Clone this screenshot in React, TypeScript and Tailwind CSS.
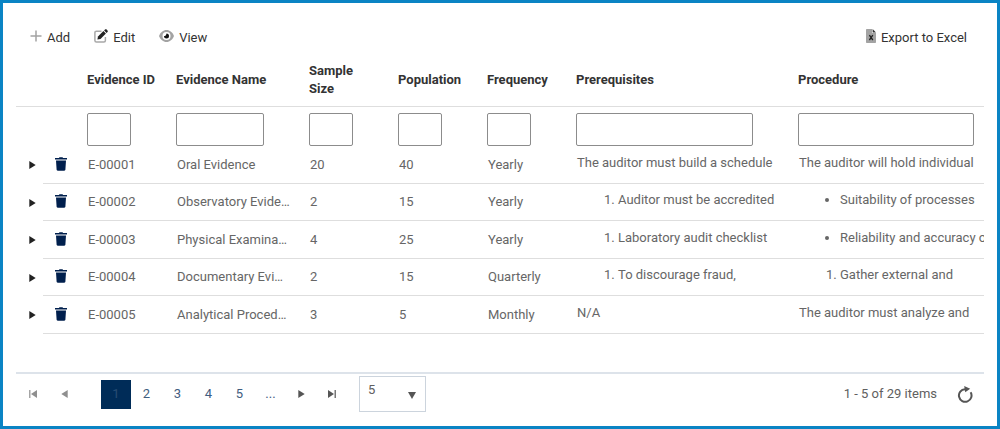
import type { ReactNode } from "react";

type Evidence = {
    id: string;
    name: string;
    sampleSize: number;
    population: number;
    frequency: string;
    prerequisites: ReactNode;
    procedure: ReactNode;
};

const Numbered = ({ children }: { children: ReactNode }) => (
    <ol className="list-decimal pl-[41px]">
        <li>{children}</li>
    </ol>
);

const Bulleted = ({ children }: { children: ReactNode }) => (
    <ul className="list-disc pl-[41px]">
        <li>{children}</li>
    </ul>
);

const columns = [
    { label: "Evidence ID", width: "w-[89px]" },
    { label: "Evidence Name", width: "w-[133px]" },
    { label: "Sample Size", width: "w-[89px]" },
    { label: "Population", width: "w-[89px]" },
    { label: "Frequency", width: "w-[89px]" },
    { label: "Prerequisites", width: "w-[222px]" },
    { label: "Procedure", width: "w-auto" },
];

const rows: Evidence[] = [
    {
        id: "E-00001",
        name: "Oral Evidence",
        sampleSize: 20,
        population: 40,
        frequency: "Yearly",
        prerequisites: "The auditor must build a schedule",
        procedure: "The auditor will hold individual",
    },
    {
        id: "E-00002",
        name: "Observatory Evide…",
        sampleSize: 2,
        population: 15,
        frequency: "Yearly",
        prerequisites: <Numbered>Auditor must be accredited</Numbered>,
        procedure: <Bulleted>Suitability of processes</Bulleted>,
    },
    {
        id: "E-00003",
        name: "Physical Examina…",
        sampleSize: 4,
        population: 25,
        frequency: "Yearly",
        prerequisites: <Numbered>Laboratory audit checklist</Numbered>,
        procedure: <Bulleted>Reliability and accuracy of</Bulleted>,
    },
    {
        id: "E-00004",
        name: "Documentary Evi…",
        sampleSize: 2,
        population: 15,
        frequency: "Quarterly",
        prerequisites: <Numbered>To discourage fraud,</Numbered>,
        procedure: <Numbered>Gather external and</Numbered>,
    },
    {
        id: "E-00005",
        name: "Analytical Proced…",
        sampleSize: 3,
        population: 5,
        frequency: "Monthly",
        prerequisites: "N/A",
        procedure: "The auditor must analyze and",
    },
];

const PlusIcon = () => (
    <svg aria-hidden="true" width="12" height="12" viewBox="0 0 12 12" className="mb-1">
        <path d="M6 0.5V11.5M0.5 6H11.5" stroke="#a3a3a3" strokeWidth="1.5" fill="none" />
    </svg>
);

const EditIcon = () => (
    <svg aria-hidden="true" width="14" height="14" viewBox="0 0 14 14" className="mb-1">
        <path
            d="M7.5 2.2H2.4C1.5 2.2 0.9 2.8 0.9 3.7V11.6C0.9 12.5 1.5 13.1 2.4 13.1H9.9C10.8 13.1 11.4 12.5 11.4 11.6V8"
            stroke="#a8a8a8"
            strokeWidth="1.5"
            fill="none"
        />
        <path d="M4 7.5L9.4 2.1L11.9 4.6L6.5 10L3.4 10.6Z" fill="#222" />
        <path d="M10.1 1.4L11 0.5C11.5 0 12.1 0 12.6 0.5L13.5 1.4C14 1.9 14 2.5 13.5 3L12.6 3.9Z" fill="#222" />
    </svg>
);

const EyeIcon = () => (
    <svg aria-hidden="true" width="15" height="12" viewBox="0 0 15 12" className="mb-1">
        <path
            d="M0 6C1.4 2.4 4.2 0 7.5 0S13.6 2.4 15 6C13.6 9.6 10.8 12 7.5 12S1.4 9.6 0 6Z"
            fill="#a3a3a3"
        />
        <circle cx="7.5" cy="6" r="4" fill="#fff" />
        <path d="M7.5 3.5A2.5 2.5 0 1 1 5 6C6.2 6.4 7.3 5.3 7.5 3.5Z" fill="#111" />
    </svg>
);

const ExcelIcon = () => (
    <svg aria-hidden="true" width="10" height="14" viewBox="0 0 10 14" className="mb-1">
        <path d="M1 0H6V4H10V13C10 13.6 9.6 14 9 14H1C0.4 14 0 13.6 0 13V1C0 0.4 0.4 0 1 0Z" fill="#a3a3a3" />
        <path d="M6.6 0L10 3.4H6.6Z" fill="#333" />
        <path d="M3.4 6.2L6.8 11M6.8 6.2L3.4 11" stroke="#222" strokeWidth="1.3" />
    </svg>
);

const TrashIcon = () => (
    <svg aria-hidden="true" width="12" height="14" viewBox="0 0 12 14" className="mx-auto">
        <path d="M0 1H4L4.4 0.3H7.6L8 1H12V2.6H0Z" fill="#001f4d" />
        <path d="M1 3.6H11L10.4 12.6C10.4 13.3 9.9 13.7 9.3 13.7H2.7C2.1 13.7 1.6 13.3 1.6 12.6Z" fill="#001f4d" />
    </svg>
);

const Triangle = ({ className }: { className?: string }) => (
    <svg aria-hidden="true" width="7" height="8" viewBox="0 0 7 8" className={className}>
        <path d="M0.3 0L6.7 4L0.3 8Z" fill="currentColor" />
    </svg>
);

const TriangleToBar = ({ className }: { className?: string }) => (
    <svg aria-hidden="true" width="8" height="8" viewBox="0 0 8 8" className={className}>
        <path d="M0 0L6 4L0 8ZM6.6 0H7.8V8H6.6Z" fill="currentColor" />
    </svg>
);

const ReloadIcon = () => (
    <svg aria-hidden="true" width="16" height="17" viewBox="0 0 16 17">
        <path d="M13.6 6.2A6.3 6.3 0 1 1 8 3.2" stroke="#555" strokeWidth="2" fill="none" />
        <path d="M7.2 0L13.2 2.8L8.2 6.2Z" fill="#555" />
    </svg>
);

const toolButton = "flex items-center gap-[5px] text-[#333]";
const pagerButton = "flex h-[29px] items-center justify-center";

export default function App() {
    return (
        <main className="border-3 border-[#0a84c4] bg-white px-[13px] pb-[14px] font-['Roboto',sans-serif] text-[13px] leading-[18px]">
            <div className="flex h-[51px] items-center justify-between pt-[18px] pr-[17px] pl-[14px]">
                <div className="flex gap-6">
                    <button type="button" className={toolButton}>
                        <PlusIcon />
                        Add
                    </button>
                    <button type="button" className={toolButton}>
                        <EditIcon />
                        Edit
                    </button>
                    <button type="button" className={toolButton}>
                        <EyeIcon />
                        View
                    </button>
                </div>
                <button type="button" className={toolButton}>
                    <ExcelIcon />
                    Export to Excel
                </button>
            </div>

            <div className="overflow-hidden">
                <table className="w-full table-fixed border-separate border-spacing-0 text-left">
                    <colgroup>
                        <col className="w-[27px]" />
                        <col className="w-[36px]" />
                        {columns.map((column) => (
                            <col key={column.label} className={column.width} />
                        ))}
                    </colgroup>
                    <thead>
                        <tr className="h-[53px]">
                            <th className="border-b border-[#dedede]" />
                            <th className="border-b border-[#dedede]" />
                            {columns.map((column) => (
                                <th
                                    key={column.label}
                                    scope="col"
                                    className="border-b border-[#dedede] pr-[10px] pl-2 font-bold text-[#333]"
                                >
                                    {column.label}
                                </th>
                            ))}
                        </tr>
                        <tr className="h-[39px]">
                            <td />
                            <td />
                            {columns.map((column) => (
                                <td key={column.label} className="pt-[6px] pr-[37px] pl-2 last:pr-[10px]">
                                    <input
                                        type="text"
                                        aria-label={`Filter by ${column.label}`}
                                        className="block h-[33px] w-full rounded-xs border border-[#8c8c8c] bg-white px-1"
                                    />
                                </td>
                            ))}
                        </tr>
                    </thead>
                    <tbody className="text-[#666]">
                        {rows.map((row) => (
                            <tr
                                key={row.id}
                                className="odd:h-[38px] even:h-[37px] *:not-first:border-b *:not-first:border-[#dedede] *:whitespace-nowrap"
                            >
                                <td>
                                    <button
                                        type="button"
                                        aria-label={`Expand ${row.id}`}
                                        className="block py-1 pl-[13px] text-[#222]"
                                    >
                                        <Triangle />
                                    </button>
                                </td>
                                <td className="pb-[2px]">
                                    <button type="button" aria-label={`Delete ${row.id}`} className="block w-full">
                                        <TrashIcon />
                                    </button>
                                </td>
                                <td className="pl-[9px]">{row.id}</td>
                                <td className="truncate pr-2 pl-[9px]">{row.name}</td>
                                <td className="pl-[9px]">{row.sampleSize}</td>
                                <td className="pl-[9px]">{row.population}</td>
                                <td className="pl-[9px]">{row.frequency}</td>
                                <td className="pb-1 pl-[9px]">{row.prerequisites}</td>
                                <td className="overflow-hidden pb-1 pl-[9px]">{row.procedure}</td>
                            </tr>
                        ))}
                    </tbody>
                </table>
            </div>

            <footer className="mt-[38px] flex items-center justify-between border-t-2 border-[#dde3ea] pt-[2px] text-[#606060]">
                <div className="flex items-center">
                    <nav aria-label="Pages" className="flex items-center text-[#3f5d80]">
                        <button
                            type="button"
                            aria-label="First page"
                            className={`${pagerButton} mx-px w-[31px] text-[#8f8f8f]`}
                        >
                            <TriangleToBar className="rotate-180" />
                        </button>
                        <button
                            type="button"
                            aria-label="Previous page"
                            className={`${pagerButton} mr-[21px] w-[31px] text-[#8f8f8f]`}
                        >
                            <Triangle className="rotate-180" />
                        </button>
                        <button
                            type="button"
                            aria-current="page"
                            className={`${pagerButton} w-[30px] bg-[#002c58] text-[#284c74]`}
                        >
                            1
                        </button>
                        {["2", "3", "4", "5", "..."].map((page) => (
                            <button key={page} type="button" className={`${pagerButton} w-[31px]`}>
                                {page}
                            </button>
                        ))}
                        <button
                            type="button"
                            aria-label="Next page"
                            className={`${pagerButton} w-[30px] text-[#555]`}
                        >
                            <Triangle />
                        </button>
                        <button
                            type="button"
                            aria-label="Last page"
                            className={`${pagerButton} w-[31px] text-[#555]`}
                        >
                            <TriangleToBar />
                        </button>
                    </nav>
                    <div className="relative ml-3">
                        <select
                            aria-label="Items per page"
                            defaultValue="5"
                            className="block h-9 w-[67px] appearance-none border border-[#ccd4dd] bg-white pb-2 pl-2"
                        >
                            <option>5</option>
                            <option>10</option>
                            <option>20</option>
                        </select>
                        <svg
                            aria-hidden="true"
                            width="8"
                            height="7"
                            viewBox="0 0 8 7"
                            className="pointer-events-none absolute top-4 right-[10px]"
                        >
                            <path d="M0 0H8L4 7Z" fill="#555" />
                        </svg>
                    </div>
                </div>
                <div className="flex items-center gap-5 pr-[11px]">
                    <span>1 - 5 of 29 items</span>
                    <button type="button" aria-label="Refresh">
                        <ReloadIcon />
                    </button>
                </div>
            </footer>
        </main>
    );
}
